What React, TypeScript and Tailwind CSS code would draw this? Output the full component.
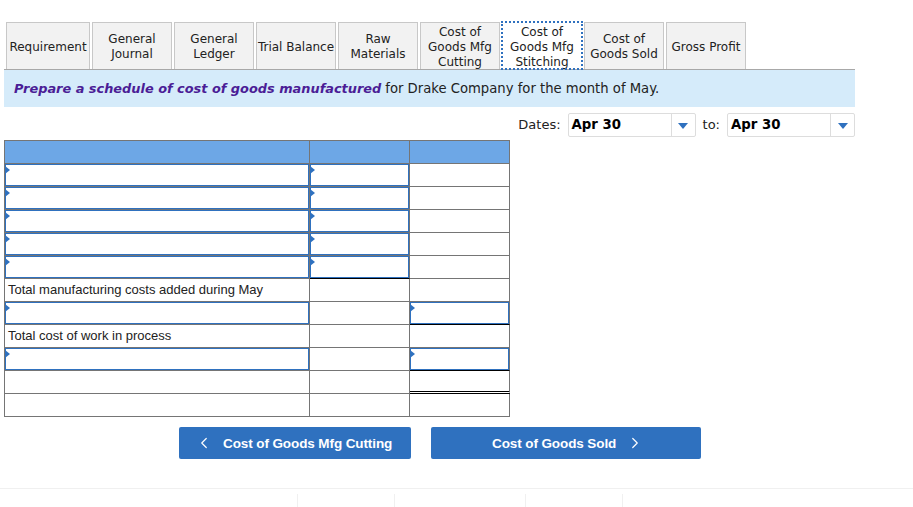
import { ChevronLeft, ChevronRight } from "lucide-react";

const tabs: { label: string[]; w: string; active?: boolean }[] = [
  { label: ["Requirement"], w: "w-[84px]" },
  { label: ["General", "Journal"], w: "w-[80px]" },
  { label: ["General", "Ledger"], w: "w-[80px]" },
  { label: ["Trial Balance"], w: "w-[80px]" },
  { label: ["Raw", "Materials"], w: "w-[80px]" },
  { label: ["Cost of", "Goods Mfg", "Cutting"], w: "w-[80px]" },
  { label: ["Cost of", "Goods Mfg", "Stitching"], w: "w-[80px]", active: true },
  { label: ["Cost of", "Goods Sold"], w: "w-[80px]" },
  { label: ["Gross Profit"], w: "w-[80px]" },
];

function Entry() {
  return (
    <div className="relative h-full w-full border border-[#2f71bf] bg-white">
      <span className="absolute left-[-1px] top-[1px] h-0 w-0 border-y-[4px] border-l-[5px] border-y-transparent border-l-[#2f71bf]" />
    </div>
  );
}

function Select({ w }: { w: string }) {
  return (
    <div className={`flex h-[24px] ${w} items-stretch rounded-[2px] border border-[#ddd] bg-white`}>
      <div className="flex flex-1 items-center pl-[3px] text-[13.3px] font-bold text-black">Apr 30</div>
      <div className="flex w-[24px] items-center justify-center border-l border-[#ddd]">
        <span className="mt-[2px] h-0 w-0 border-x-[5px] border-t-[6px] border-x-transparent border-t-[#2f71bf]" />
      </div>
    </div>
  );
}

type Row = { a?: string; aIn?: boolean; bIn?: boolean; cIn?: boolean; bBlack?: boolean; cBlack?: boolean; cDouble?: boolean };

const rows: Row[] = [
  { aIn: true, bIn: true },
  { aIn: true, bIn: true },
  { aIn: true, bIn: true },
  { aIn: true, bIn: true },
  { aIn: true, bIn: true, bBlack: true },
  { a: "Total manufacturing costs added during May" },
  { aIn: true, cIn: true, cBlack: true },
  { a: "Total cost of work in process" },
  { aIn: true, cIn: true, cBlack: true },
  { cDouble: true },
  {},
];

export default function App() {
  return (
    <div className="h-[507px] w-[913px] overflow-hidden bg-white pt-[22px] font-['DejaVu_Sans',sans-serif] text-[12px] text-[#222]">
      <div className="ml-[4px] flex h-[47px] w-[851px] gap-[2px] pl-[2px]">
        {tabs.map((t, i) => (
          <div
            key={i}
            className={`flex ${t.w} flex-col items-center justify-center whitespace-nowrap text-center leading-[15px] ${
              t.active
                ? "relative z-10 bg-white pt-[4px] outline-dotted outline-2 outline-[#2f71bf] -outline-offset-1"
                : "border border-b-0 border-[#c8c8c8] bg-[#f2f2f2] pt-[2px]"
            }`}
          >
            {t.label.map((l) => (
              <span key={l}>{l}</span>
            ))}
          </div>
        ))}
      </div>
      <div className="ml-[4px] flex h-[38px] w-[851px] items-center border-t border-[#a8a8a8] bg-[#d5ebfa] pl-[10px] text-[13.2px]">
        <span className="mr-[4px] text-[12.9px] font-bold italic text-[#4b1d96]">Prepare a schedule of cost of goods manufactured</span>
        <span>for Drake Company for the month of May.</span>
      </div>
      <div className="ml-[4px] mt-[5px] flex h-[25px] w-[851px] items-center justify-end text-[13px]">
        <span className="mr-[7px]">Dates:</span>
        <Select w="w-[128px]" />
        <span className="mx-[7px]">to:</span>
        <Select w="w-[128px]" />
      </div>
      <div className="ml-[4px] mt-[3px] w-[506px] border-l border-t border-[#757575] font-['Liberation_Sans',sans-serif] text-[13px] text-[#222]">
        <div className="flex h-[23px] bg-[#6da7e6]">
          <div className="w-[305px] border-b border-r border-[#757575]" />
          <div className="w-[100px] border-b border-r border-[#757575]" />
          <div className="flex-1 border-b border-r border-[#757575]" />
        </div>
        {rows.map((r, i) => (
          <div key={i} className="flex h-[23px]">
            <div className="flex w-[305px] items-center whitespace-nowrap border-b border-r border-[#757575] pl-[3px]">
              {r.aIn ? <div className="-ml-[3px] h-full w-[calc(100%+3px)]"><Entry /></div> : r.a}
            </div>
            <div className={`w-[100px] border-r border-[#757575] ${r.bBlack ? "border-b border-b-black" : "border-b"}`}>
              {r.bIn && <Entry />}
            </div>
            <div className={`flex-1 border-r border-[#757575] ${r.cBlack ? "border-b border-b-black" : r.cDouble ? "border-b-[3px] border-b-black border-double" : "border-b"}`}>
              {r.cIn && <Entry />}
            </div>
          </div>
        ))}
      </div>
      <div className="ml-[179px] mt-[10px] flex gap-[20px] font-['Liberation_Sans',sans-serif] text-[13.5px] font-bold tracking-[-0.1px] text-white">
        <button className="flex h-[32px] w-[232px] items-center rounded-[2px] bg-[#2f71bf] pl-[16px]">
          <ChevronLeft size={18} strokeWidth={1.6} />
          <span className="ml-[10px] pt-[2px]">Cost of Goods Mfg Cutting</span>
        </button>
        <button className="flex h-[32px] w-[270px] items-center rounded-[2px] bg-[#2f71bf] pl-[61px]">
          <span className="pt-[2px]">Cost of Goods Sold</span>
          <ChevronRight size={18} strokeWidth={1.6} className="ml-[10px]" />
        </button>
      </div>
      <div className="mt-[29px] h-[19px] border-t border-[#f0f0f0] pt-[5px]">
        <div className="flex h-full pl-[297px]">
          <div className="h-full w-[97px] border-l border-[#f0f0f0]" />
          <div className="h-full w-[131px] border-l border-[#f0f0f0]" />
          <div className="h-full w-[97px] border-l border-[#f0f0f0]" />
          <div className="h-full w-[97px] border-l border-[#f0f0f0]" />
        </div>
      </div>
    </div>
  );
}
